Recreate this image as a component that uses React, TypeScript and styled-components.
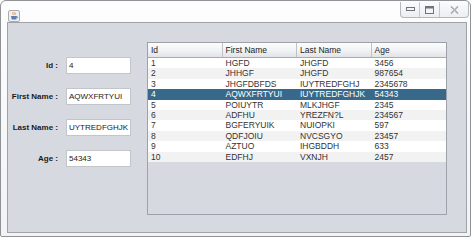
import React from 'react';
import styled, { createGlobalStyle } from 'styled-components';

const GlobalStyle = createGlobalStyle`
  html, body {
    margin: 0;
    padding: 0;
    background: #ffffff;
  }
  body {
    font-family: "Liberation Sans", Arial, sans-serif;
  }
`;

const Frame = styled.div`
  width: 471px;
  height: 237px;
  box-sizing: border-box;
  border: 1px solid #8e9296;
  border-radius: 6px 6px 2px 2px;
  background: linear-gradient(#fdfdfd, #f2f3f5);
  display: flex;
  flex-direction: column;
`;

const TitleBar = styled.div`
  height: 21px;
  display: flex;
  align-items: flex-start;
  flex-shrink: 0;
`;

const AppIcon = styled.div`
  margin: 7px 0 0 7px;
  width: 12px;
  height: 12px;
`;

const CaptionButtons = styled.div`
  margin-left: auto;
  margin-right: 1px;
  margin-top: 1px;
  display: flex;
  height: 15px;
  border: 1px solid #b4b8bd;
  border-top: none;
  border-radius: 0 0 4px 4px;
  background: linear-gradient(#fbfbfc, #eceef0);
  overflow: hidden;
`;

const CaptionButton = styled.div<{ $w: number; $last?: boolean }>`
  width: ${(p) => p.$w}px;
  display: flex;
  align-items: center;
  justify-content: center;
  border-right: ${(p) => (p.$last ? 'none' : '1px solid #c4c8cc')};
`;

const Content = styled.div`
  flex: 1;
  margin: 0 3px 3px 6px;
  border: 1px solid #9fa3a8;
  background: #d6d9df;
  display: flex;
  align-items: flex-start;
`;

const Form = styled.div`
  padding-top: 34px;
  display: grid;
  grid-template-columns: 50px 65px;
  column-gap: 8px;
  row-gap: 14px;
  align-items: center;
`;

const Label = styled.label`
  text-align: right;
  font-weight: bold;
  font-size: 8px;
  color: #1a1a1a;
  white-space: nowrap;
`;

const Field = styled.div`
  height: 17px;
  box-sizing: border-box;
  background: #ffffff;
  border: 1px solid #c2c5ca;
  padding-left: 2px;
  display: flex;
  align-items: center;
  font-size: 8px;
  color: #222;
  white-space: nowrap;
  overflow: hidden;
`;

const TableScroll = styled.div`
  margin: 19px 0 0 16px;
  width: 300px;
  height: 173px;
  box-sizing: border-box;
  border: 1px solid #9da2aa;
  background: #d6d9df;
`;

const HeaderRow = styled.div`
  display: grid;
  grid-template-columns: repeat(4, 1fr);
  height: 14px;
  background: linear-gradient(#fdfdfd, #f1f2f4 55%, #e1e3e7);
  border-bottom: 1px solid #a7abb2;
`;

const HeaderCell = styled.div<{ $last?: boolean }>`
  padding-left: 3px;
  display: flex;
  align-items: center;
  font-size: 8.5px;
  color: #222;
  border-right: ${(p) => (p.$last ? 'none' : '1px solid #bfc3c9')};
`;

const Row = styled.div<{ $even: boolean; $selected: boolean }>`
  display: grid;
  grid-template-columns: repeat(4, 1fr);
  height: 10.4px;
  background: ${(p) => (p.$selected ? '#39698a' : p.$even ? '#f2f2f2' : '#ffffff')};
  color: ${(p) => (p.$selected ? '#ffffff' : '#333333')};
`;

const Cell = styled.div`
  padding-left: 3px;
  font-size: 8.5px;
  line-height: 10.4px;
  white-space: nowrap;
  overflow: hidden;
`;

const rows = [
  ['1', 'HGFD', 'JHGFD', '3456'],
  ['2', 'JHHGF', 'JHGFD', '987654'],
  ['3', 'JHGFDBFDS', 'IUYTREDFGHJ', '2345678'],
  ['4', 'AQWXFRTYUI', 'IUYTREDFGHJK', '54343'],
  ['5', 'POIUYTR', 'MLKJHGF', '2345'],
  ['6', 'ADFHU', 'YREZFN?L', '234567'],
  ['7', 'BGFERYUIK', 'NUIOPKI', '597'],
  ['8', 'QDFJOIU', 'NVCSGYO', '23457'],
  ['9', 'AZTUO', 'IHGBDDH', '633'],
  ['10', 'EDFHJ', 'VXNJH', '2457'],
];

const fields = [
  ['Id :', '4'],
  ['First Name :', 'AQWXFRTYUI'],
  ['Last Name :', 'UYTREDFGHJK'],
  ['Age :', '54343'],
];

const JavaIcon = () => (
  <svg width="12" height="12" viewBox="0 0 12 12">
    <rect x="0.5" y="0.5" width="11" height="11" rx="1.5" fill="#eef0f3" stroke="#a9adb3" />
    <path d="M5 2 C4 3 6 3.5 5 5 M7 2 C6 3 8 3.5 7 5" stroke="#d9822b" strokeWidth="0.8" fill="none" />
    <path d="M3 6 H9 L8.3 9.5 H3.7 Z" fill="#5a7fb0" />
    <path d="M9 6.5 Q10.5 7 9 8.3" stroke="#5a7fb0" strokeWidth="0.8" fill="none" />
  </svg>
);

const App = () => {
  return (
    <>
      <GlobalStyle />
      <Frame>
        <TitleBar>
          <AppIcon>
            <JavaIcon />
          </AppIcon>
          <CaptionButtons>
            <CaptionButton $w={18}>
              <svg width="9" height="5" viewBox="0 0 9 5">
                <rect x="0.5" y="0.5" width="8" height="3" fill="#f4f5f6" stroke="#6f747a" />
              </svg>
            </CaptionButton>
            <CaptionButton $w={19}>
              <svg width="9" height="8" viewBox="0 0 9 8">
                <rect x="0.5" y="0.5" width="8" height="7" fill="#f4f5f6" stroke="#6f747a" />
                <rect x="1" y="1" width="7" height="1.5" fill="#6f747a" />
              </svg>
            </CaptionButton>
            <CaptionButton $w={28} $last>
              <svg width="9" height="8" viewBox="0 0 9 8">
                <path d="M1 0.5 L8 7.5 M8 0.5 L1 7.5" stroke="#8a8f95" strokeWidth="1.4" />
                <path d="M1 0.5 L8 7.5 M8 0.5 L1 7.5" stroke="#f4f5f6" strokeWidth="0.5" />
              </svg>
            </CaptionButton>
          </CaptionButtons>
        </TitleBar>
        <Content>
          <Form>
            {fields.map(([label, value]) => (
              <React.Fragment key={label}>
                <Label>{label}</Label>
                <Field>{value}</Field>
              </React.Fragment>
            ))}
          </Form>
          <TableScroll>
            <HeaderRow>
              <HeaderCell>Id</HeaderCell>
              <HeaderCell>First Name</HeaderCell>
              <HeaderCell>Last Name</HeaderCell>
              <HeaderCell $last>Age</HeaderCell>
            </HeaderRow>
            {rows.map((r, i) => (
              <Row key={r[0]} $even={i % 2 === 1} $selected={r[0] === '4'}>
                {r.map((c, j) => (
                  <Cell key={j}>{c}</Cell>
                ))}
              </Row>
            ))}
          </TableScroll>
        </Content>
      </Frame>
    </>
  );
};

export default App;
